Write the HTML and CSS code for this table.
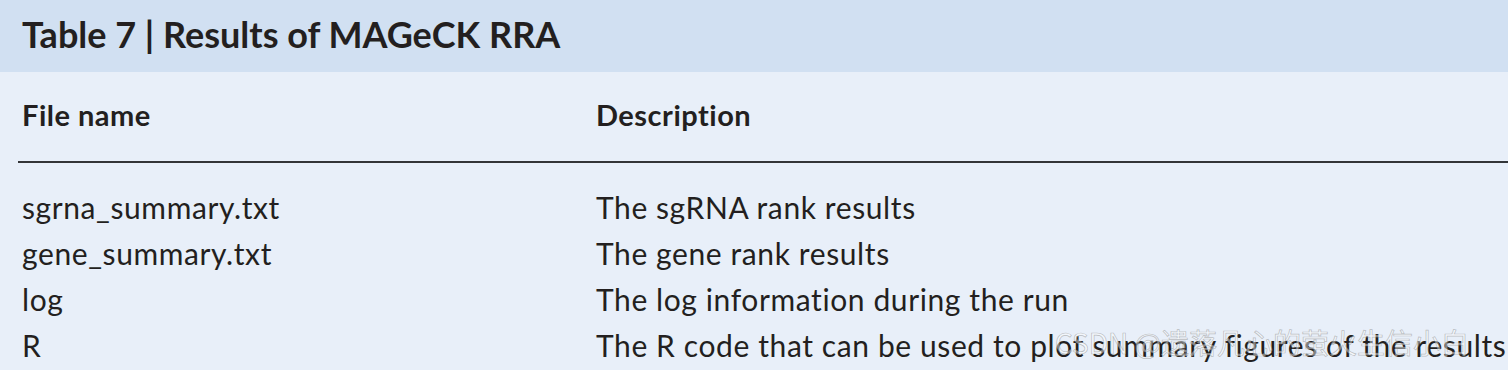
FILE: index.html
```html
<!DOCTYPE html>
<html>
<head>
<meta charset="utf-8">
<link rel="stylesheet" href="styles.css">
</head>
<body>
<div class="page">
  <div class="caption">Table 7 | Results of MAGeCK RRA</div>
  <div class="table">
    <div class="row head">
      <div class="c1">File name</div>
      <div class="c2">Description</div>
    </div>
    <div class="tbody">
      <div class="row">
        <div class="c1">sgrna_summary.txt</div>
        <div class="c2">The sgRNA rank results</div>
      </div>
      <div class="row">
        <div class="c1">gene_summary.txt</div>
        <div class="c2">The gene rank results</div>
      </div>
      <div class="row">
        <div class="c1">log</div>
        <div class="c2">The log information during the run</div>
      </div>
      <div class="row">
        <div class="c1">R</div>
        <div class="c2">The R code that can be used to plot summary figures of the results</div>
      </div>
    </div>
  </div>
  <div class="watermark">CSDN @遗落凡心的萤火生信小白</div>
</div>
</body>
</html>
```
FILE: styles.css
```css
html, body {
  margin: 0;
  padding: 0;
  background: #e8eff9;
}
.page {
  position: relative;
  width: 1508px;
  height: 370px;
  overflow: hidden;
  font-family: Lato, "Noto Sans", sans-serif;
  color: #231f20;
}
.caption {
  height: 72px;
  box-sizing: border-box;
  background: #d1e0f2;
  padding-left: 22px;
  font-weight: 700;
  font-size: 36px;
  line-height: 68px;
  white-space: nowrap;
}
.table {
  padding-left: 18px;
}
.row {
  display: grid;
  grid-template-columns: 578px 1fr;
  white-space: nowrap;
}
.c1 {
  padding-left: 4px;
}
.head {
  padding-top: 20px;
  padding-bottom: 23px;
  border-bottom: 2px solid #333538;
  font-weight: 700;
  font-size: 29px;
  line-height: 46px;
  letter-spacing: 0.5px;
}
.tbody {
  padding-top: 21px;
  font-size: 30px;
  line-height: 46px;
  letter-spacing: 0.6px;
}
.watermark {
  position: absolute;
  left: 1055px;
  top: 322px;
  font-family: "Noto Sans CJK SC", sans-serif;
  font-size: 28px;
  line-height: 40px;
  white-space: nowrap;
  color: rgba(255, 255, 255, 0.45);
  -webkit-text-stroke: 0.7px rgba(140, 140, 140, 0.55);
}
```
